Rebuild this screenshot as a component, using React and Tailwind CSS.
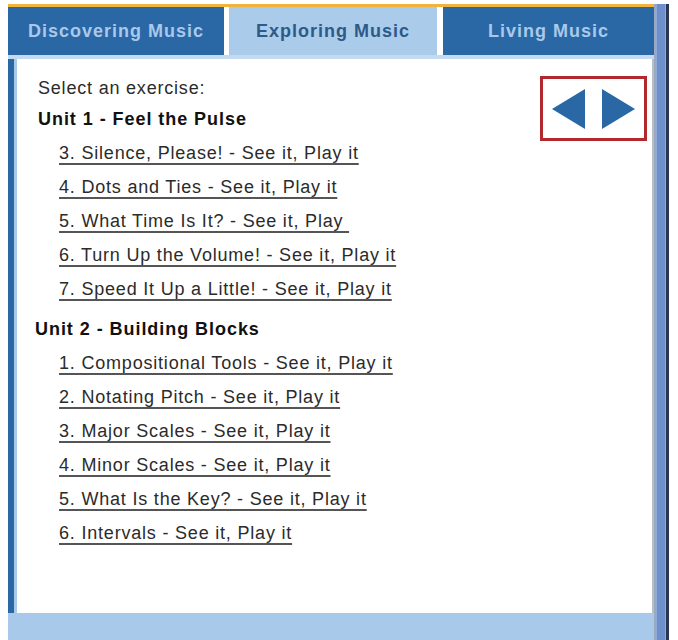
import React from 'react';

const unit1 = [
    '3. Silence, Please! - See it, Play it',
    '4. Dots and Ties - See it, Play it',
    '5. What Time Is It? - See it, Play\u00a0',
    '6. Turn Up the Volume! - See it, Play it',
    '7. Speed It Up a Little! - See it, Play it',
];

const unit2 = [
    '1. Compositional Tools - See it, Play it',
    '2. Notating Pitch - See it, Play it',
    '3. Major Scales - See it, Play it',
    '4. Minor Scales - See it, Play it',
    '5. What Is the Key? - See it, Play it',
    '6. Intervals - See it, Play it',
];

function ExerciseLink({ label }) {
    return (
        <div className="h-[34px] flex items-center pl-[21px]">
            <a
                href="#"
                className="text-[18px] tracking-[0.8px] text-[#2b2b2b] underline decoration-[#555] decoration-2 underline-offset-[4px]"
            >
                {label}
            </a>
        </div>
    );
}

export default function App() {
    return (
        <div
            className="w-[678px] h-[640px] bg-white flex overflow-hidden"
            style={{ fontFamily: '"Liberation Sans", Arial, sans-serif' }}
        >
            {/* left page margin */}
            <div className="w-[8px] shrink-0" />

            {/* Main panel */}
            <div className="w-[646px] shrink-0 flex flex-col pt-[4px]">
                <div className="h-[3px] bg-[#f0b43c]" />

                {/* Tabs */}
                <div className="h-[48px] flex">
                    <div className="w-[216px] bg-[#2a67a5] flex items-center justify-center text-[18px] tracking-[1px] font-bold text-[#a9c9ea]">
                        Discovering Music
                    </div>
                    <div className="w-[5px] bg-white" />
                    <div className="w-[208px] bg-[#abcbeb] flex items-center justify-center text-[18px] tracking-[1px] font-bold text-[#2d5a88]">
                        Exploring Music
                    </div>
                    <div className="w-[6px] bg-white" />
                    <div className="flex-1 bg-[#2a67a5] flex items-center justify-center text-[18px] tracking-[1px] font-bold text-[#a9c9ea]">
                        Living Music
                    </div>
                </div>
                <div className="h-[4px] bg-[#c4daf1]" />

                {/* Content */}
                <div className="flex-1 flex">
                    <div className="w-[6px] bg-[#2a67a5]" />
                    <div className="w-[3px] bg-[#a9c9ea]" />
                    <div className="flex-1 bg-white border-r-2 border-[#b8bcc4] flex justify-between pl-[21px] pr-[5px] pt-[16px]">
                        <div>
                            <div className="text-[18px] tracking-[0.8px] text-[#2b2b2b] leading-[26px]">Select an exercise:</div>
                            <div className="text-[18px] tracking-[0.95px] font-bold text-[#111] leading-[26px] mt-[5px]">
                                Unit 1 - Feel the Pulse
                            </div>
                            <div className="mt-[4px]">
                                {unit1.map((l) => (
                                    <ExerciseLink key={l} label={l} />
                                ))}
                            </div>
                            <div className="text-[18px] tracking-[0.95px] font-bold text-[#111] leading-[26px] mt-[10px] -ml-[3px]">
                                Unit 2 - Building Blocks
                            </div>
                            <div className="mt-[4px]">
                                {unit2.map((l) => (
                                    <ExerciseLink key={l} label={l} />
                                ))}
                            </div>
                        </div>

                        {/* Prev / next */}
                        <div className="mt-[1px] w-[107px] h-[65px] border-[3px] border-[#b3282c] flex items-center justify-between px-[9px]">
                            <svg width="34" height="40" viewBox="0 0 34 40">
                                <polygon points="0,20 33,0 33,40" fill="#2a67a5" />
                            </svg>
                            <svg width="34" height="40" viewBox="0 0 34 40">
                                <polygon points="1,0 34,20 1,40" fill="#2a67a5" />
                            </svg>
                        </div>
                    </div>
                </div>

                <div className="h-[27px] bg-[#a9c9ea]" />
            </div>

            {/* right frame / scroll strip */}
            <div className="flex pt-[4px]">
                <div className="w-[2px] bg-[#9aa8c0]" />
                <div className="w-[10px] bg-[#6d8fca] border-x border-[#8fa9d8]" />
                <div className="w-[3px] bg-[#2b3650]" />
            </div>
        </div>
    );
}
